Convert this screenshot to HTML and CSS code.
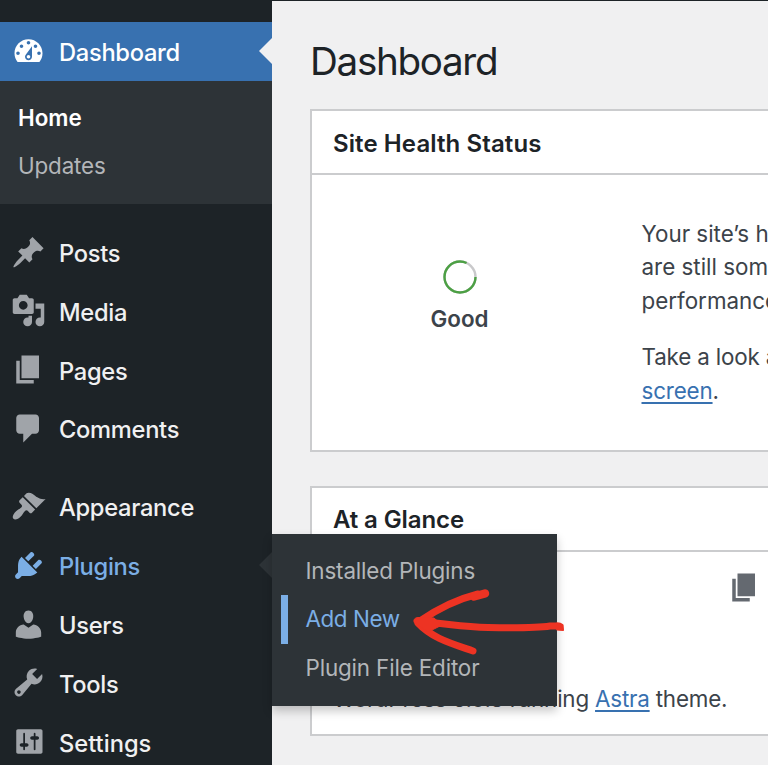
FILE: index.html
```html
<!DOCTYPE html>
<html lang="en">
<head>
<meta charset="utf-8">
<title>Dashboard</title>
<link rel="stylesheet" href="styles.css">
</head>
<body>
<div class="topbar"></div>
<div class="layout">
  <nav class="sidebar">
    <a class="item current"><svg class="icon" viewBox="0 0 20 20"><path d="M3.76 16h12.48c1.1-1.37 1.76-3.11 1.76-5 0-4.42-3.58-8-8-8s-8 3.58-8 8c0 1.89.66 3.63 1.76 5zM10 4c.55 0 1 .45 1 1s-.45 1-1 1-1-.45-1-1 .45-1 1-1zM6 6c.55 0 1 .45 1 1s-.45 1-1 1-1-.45-1-1 .45-1 1-1zm8 0c.55 0 1 .45 1 1s-.45 1-1 1-1-.45-1-1 .45-1 1-1zm-5.37 5.55L12 7v6c0 1.1-.9 2-2 2s-2-.9-2-2c0-.57.24-1.08.63-1.45zM4 10c.55 0 1 .45 1 1s-.45 1-1 1-1-.45-1-1 .45-1 1-1zm12 0c.55 0 1 .45 1 1s-.45 1-1 1-1-.45-1-1 .45-1 1-1zm-5 3c0-.55-.45-1-1-1s-1 .45-1 1 .45 1 1 1 1-.45 1-1z"/></svg><span>Dashboard</span></a>
    <div class="submenu">
      <a class="sub active">Home</a>
      <a class="sub">Updates</a>
    </div>
    <div class="group">
      <a class="item"><svg class="icon" viewBox="0 0 20 20"><path d="M10.44 3.02l1.82-1.82 6.36 6.35-1.83 1.82c-1.05-.68-2.48-.57-3.41.36l-.75.75c-.92.93-1.04 2.35-.35 3.41l-1.83 1.82-2.41-2.41-2.8 2.79c-.42.42-3.38 2.71-3.8 2.29s1.86-3.39 2.28-3.81l2.79-2.79L4.1 9.36l1.83-1.82c1.05.69 2.48.57 3.4-.36l.75-.75c.93-.92 1.05-2.35.36-3.41z"/></svg><span>Posts</span></a>
      <a class="item"><svg class="icon" viewBox="0 0 20 20"><path d="M13 11V4c0-.55-.45-1-1-1h-1.67L9 1H5L3.67 3H2c-.55 0-1 .45-1 1v7c0 .55.45 1 1 1h10c.55 0 1-.45 1-1zM7 4.5c1.38 0 2.5 1.12 2.5 2.5S8.38 9.5 7 9.5 4.5 8.38 4.5 7 5.62 4.5 7 4.5zM14 6h5v10.5c0 1.38-1.12 2.5-2.5 2.5S14 17.88 14 16.5s1.12-2.5 2.5-2.5c.17 0 .34.02.5.05V9h-3V6zm-4 8.05V13h2v3.5c0 1.38-1.12 2.5-2.5 2.5S7 17.88 7 16.5 8.12 14 9.5 14c.17 0 .34.02.5.05z"/></svg><span>Media</span></a>
      <a class="item"><svg class="icon" viewBox="0 0 20 20"><path d="M6 15V2h10v13H6zm-1 1h8v2H3V5h2v11z"/></svg><span>Pages</span></a>
      <a class="item"><svg class="icon" viewBox="0 0 20 20"><path d="M5 2h9c1.1 0 2 .9 2 2v7c0 1.1-.9 2-2 2h-2l-5 5v-5H5c-1.1 0-2-.9-2-2V4c0-1.1.9-2 2-2z"/></svg><span>Comments</span></a>
    </div>
    <div class="group">
      <a class="item"><svg class="icon" viewBox="0 0 20 20"><path d="M14.48 11.06L7.41 3.99l1.5-1.5c.5-.56 2.3-.47 3.51.32 1.21.8 1.43 1.28 2.91 2.1 1.18.64 2.45 1.26 4.45.85zm-.71.71L6.7 4.7 4.93 6.47c-.39.39-.39 1.02 0 1.41l1.06 1.06c.39.39.39 1.03 0 1.42-.6.6-1.43 1.11-2.21 1.69-.35.26-.7.53-1.01.84C1.43 14.23.4 16.08 1.4 17.07c.99 1 2.84-.03 4.18-1.36.31-.31.58-.66.85-1.02.57-.78 1.08-1.61 1.69-2.21.39-.39 1.02-.39 1.41 0l1.06 1.06c.39.39 1.02.39 1.41 0z"/></svg><span>Appearance</span></a>
      <a class="item hover"><svg class="icon" viewBox="0 0 20 20"><path d="M13.11 4.36L9.87 7.6 8 5.73l3.24-3.24c.35-.34 1.05-.2 1.56.32.52.51.66 1.21.31 1.55zm-8 1.77l.91-1.12 9.01 9.01-1.19.84c-.71.71-2.63 1.16-3.82 1.16H6.14L4.9 17.26c-.59.59-1.54.59-2.12 0-.59-.58-.59-1.53 0-2.12l1.24-1.24v-3.88c0-1.13.4-3.19 1.09-3.89zm7.26 3.97l3.24-3.24c.34-.35 1.04-.21 1.55.31.52.51.66 1.21.31 1.55l-3.24 3.25z"/></svg><span>Plugins</span></a>
      <a class="item"><svg class="icon" viewBox="0 0 20 20"><path d="M10 9.25c-2.27 0-2.73-3.44-2.73-3.44C7 4.02 7.82 2 9.97 2c2.16 0 2.98 2.02 2.71 3.81 0 0-.41 3.44-2.68 3.44zm0 2.57L12.72 10c2.39 0 4.52 2.33 4.52 4.53v2.49s-3.65 1.13-7.24 1.13c-3.65 0-7.24-1.13-7.24-1.13v-2.49c0-2.25 1.94-4.48 4.47-4.48z"/></svg><span>Users</span></a>
      <a class="item"><svg class="icon" viewBox="0 0 20 20"><path d="M16.68 9.77c-1.34 1.34-3.3 1.67-4.95.99l-5.41 6.52c-.99.99-2.59.99-3.58 0s-.99-2.59 0-3.57l6.52-5.42c-.68-1.65-.35-3.61.99-4.95 1.28-1.28 3.12-1.62 4.72-1.06l-2.89 2.89 2.82 2.82 2.86-2.87c.53 1.58.18 3.39-1.08 4.65zM3.81 16.21c.4.39 1.04.39 1.43 0 .4-.4.4-1.04 0-1.43-.39-.4-1.03-.4-1.43 0-.39.39-.39 1.03 0 1.43z"/></svg><span>Tools</span></a>
      <a class="item"><svg class="icon" viewBox="0 0 20 20"><path d="M18 16V4c0-.55-.45-1-1-1H4c-.55 0-1 .45-1 1v12c0 .55.45 1 1 1h13c.55 0 1-.45 1-1zM8 11h1c.55 0 1 .45 1 1s-.45 1-1 1H8v1.5c0 .28-.22.5-.5.5s-.5-.22-.5-.5V13H6c-.55 0-1-.45-1-1s.45-1 1-1h1V5.5c0-.28.22-.5.5-.5s.5.22.5.5V11zm5-2h-1c-.55 0-1-.45-1-1s.45-1 1-1h1V5.5c0-.28.22-.5.5-.5s.5.22.5.5V7h1c.55 0 1 .45 1 1s-.45 1-1 1h-1v5.5c0 .28-.22.5-.5.5s-.5-.22-.5-.5V9z"/></svg><span class="settings">Settings</span></a>
    </div>
  </nav>
  <main class="content">
    <h1>Dashboard</h1>
    <section class="card health">
      <h2>Site Health Status</h2>
      <div class="health-body">
        <div class="status">
          <svg class="ring" viewBox="0 0 36 36"><circle class="track" cx="18" cy="18" r="15.5"/><circle class="value" cx="18" cy="18" r="15.5" pathLength="100" stroke-dasharray="82 18"/></svg>
          <strong>Good</strong>
        </div>
        <div class="copy">
          <p>Your site’s health<br>are still some<br>performance</p>
          <p class="look">Take a look at<br><a>screen</a>.</p>
        </div>
      </div>
    </section>
    <section class="card glance">
      <h2 class="glance-title">At a Glance</h2>
      <div class="glance-body">
        <svg class="page-icon" viewBox="0 0 20 20"><path d="M6 15V2h10v13H6zm-1 1h8v2H3V5h2v11z"/></svg>
        <p>WordPress 6.0.3 running <a>Astra</a> theme.</p>
      </div>
    </section>
  </main>
</div>
<div class="flyout">
  <a class="fly">Installed Plugins</a>
  <a class="fly selected">Add New</a>
  <a class="fly editor">Plugin File Editor</a>
</div>
<svg class="arrow" viewBox="0 0 160 74"><path d="M10 38C34 39 50 43 78 43.5C108 44 130 43.5 140 42L149 42"/><path d="M147 39L153 40.5L153.500 46.500L147 46Z" class="head"/><path class="barb" d="M10 37C26 26 44 16 68 10"/><path class="thick" d="M64 12.500L75 9.500"/><path class="barb" d="M8 39C22 54 40 59 63 67"/><path class="head" d="M4 38Q3 34 8 33.500L24 34L32 41L18 48Z"/></svg>
</body>
</html>
```

FILE: styles.css
```css
* { box-sizing: border-box; }
body {
  margin: 0;
  width: 768px;
  height: 765px;
  overflow: hidden;
  position: relative;
  background: #f0f0f1;
  color: #3c434a;
  font-family: Inter, "Liberation Sans", sans-serif;
}
h1, h2, p { margin: 0; font-weight: 400; white-space: nowrap; }
.topbar { height: 1px; background: #1d2327; }
.layout { display: flex; height: 764px; }
.sidebar {
  width: 272px;
  flex: none;
  padding-top: 21px;
  background: #1d2327;
  overflow: hidden;
}
.item {
  display: flex;
  align-items: center;
  height: 58.8px;
  padding-left: 10.5px;
  gap: 13.5px;
  position: relative;
  color: #f0f0f1;
  font-size: 23.7px;
  font-weight: 450;
  letter-spacing: -0.3px;
}
.item span { padding-top: 2px; }
.item .settings { letter-spacing: 0; }
.icon { width: 35px; height: 35px; flex: none; fill: #a0a4a9; position: relative; top: -0.5px; }
.current { background: #3871b0; color: #fff; }
.current .icon { fill: #fff; top: 0; }
.current::after, .hover::after {
  content: "";
  position: absolute;
  right: 0;
  top: 15.5px;
  border: 13.5px solid transparent;
  border-left: 0;
  border-right-color: #f0f0f1;
}
.hover { color: #7baee5; }
.hover .icon { fill: #7baee5; }
.hover::after { border-right-color: #2d3337; }
.submenu { height: 123.2px; padding: 13px 18px 0; background: #2d3337; }
.sub, .fly {
  display: block;
  font-size: 22.4px;
  line-height: 48.5px;
  letter-spacing: -0.15px;
  color: #b3b6b9;
}
.sub.active { color: #fff; font-weight: 600; letter-spacing: 0; }
.group { margin-top: 19.2px; }
.content { flex: 1; min-width: 0; overflow: hidden; padding: 37px 0 0 38px; }
h1 {
  height: 71px;
  font-size: 38.6px;
  line-height: 46px;
  letter-spacing: -1.3px;
  color: #1d2327;
}
.card { width: 520px; background: #fff; border: 2px solid #cbccce; }
.card h2 {
  height: 64px;
  padding-left: 21px;
  border-bottom: 2px solid #cbccce;
  font-size: 24px;
  font-weight: 600;
  line-height: 65px;
  letter-spacing: 0.1px;
  color: #1d2327;
}
.card .glance-title { line-height: 64px; letter-spacing: -0.1px; }
.health { height: 343px; }
.health-body { display: flex; }
.status {
  width: 295px;
  padding-top: 84px;
  display: flex;
  flex-direction: column;
  align-items: center;
  font-size: 22.4px;
  line-height: 30px;
}
.status strong { font-weight: 600; margin-top: 9px; }
.ring { width: 36px; height: 36px; fill: none; stroke-width: 2.4; }
.track { stroke: #c9c9cb; }
.value { stroke: #4ca044; }
.copy { padding: 41.5px 0 0 34.5px; font-size: 22.4px; line-height: 33.8px; }
.copy p + p { margin-top: 22px; }
.copy .look { letter-spacing: -0.16px; }
.copy a, .glance a {
  color: #3871b0;
  text-decoration: underline;
  text-decoration-thickness: 2px;
  text-underline-offset: 3px;
}
.glance { height: 250px; margin-top: 34px; }
.glance-body { padding: 18px 0 0 21px; font-size: 22.4px; }
.page-icon { display: block; width: 35px; height: 35px; margin-left: 394px; fill: #646970; }
.glance p { margin-top: 77px; line-height: 34px; letter-spacing: -0.2px; }
.flyout {
  position: absolute;
  left: 272px;
  top: 534px;
  width: 285px;
  height: 171.5px;
  padding-top: 12.5px;
  background: #2d3337;
  box-shadow: 0 5px 9px rgba(0, 0, 0, .22);
}
.fly { margin-left: 9px; padding-left: 24.5px; }
.fly.selected { border-left: 7px solid #7baee5; padding-left: 17.5px; color: #7baee5; letter-spacing: -0.4px; }
.arrow {
  position: absolute;
  left: 410px;
  top: 584px;
  width: 160px;
  height: 74px;
  fill: none;
  stroke: #ed3323;
  stroke-width: 7;
  stroke-linecap: round;
}
.arrow .barb { stroke-width: 7; }
.arrow .thick { stroke-width: 8.5; }
.arrow .head { fill: #ed3323; stroke-width: 1; }
```
